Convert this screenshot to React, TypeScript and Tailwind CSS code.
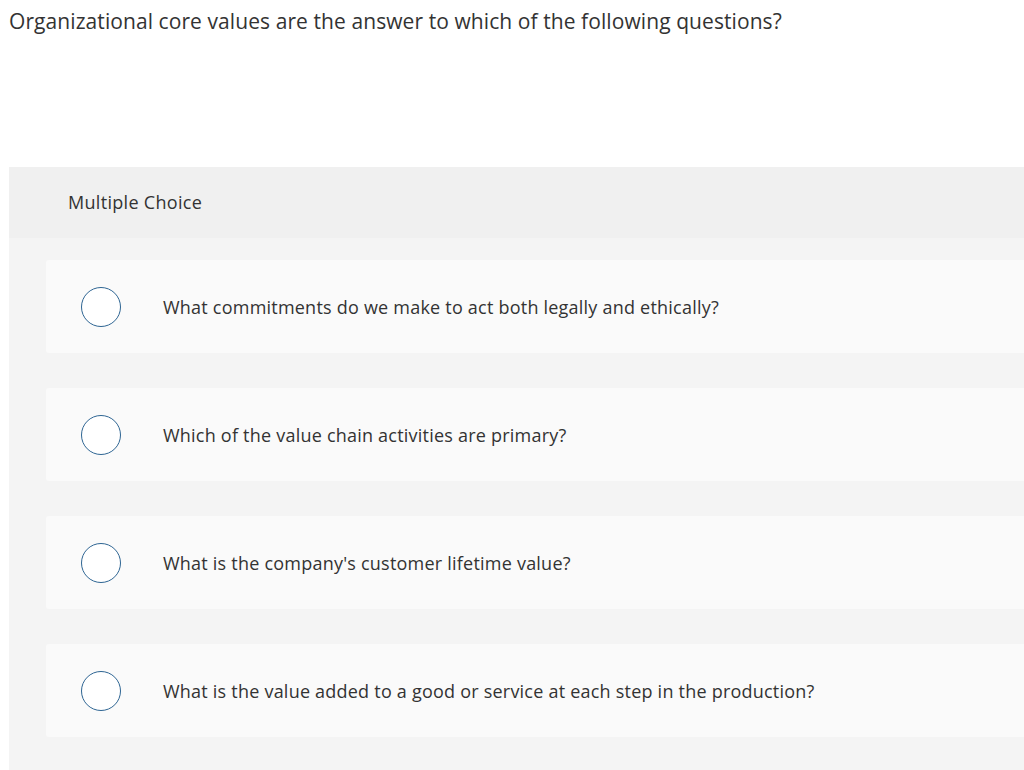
import React from 'react';

const options = [
  'What commitments do we make to act both legally and ethically?',
  'Which of the value chain activities are primary?',
  "What is the company's customer lifetime value?",
  'What is the value added to a good or service at each step in the production?',
];

const App: React.FC = () => {
  return (
    <div className="min-h-screen bg-white overflow-hidden font-['Open_Sans',sans-serif] text-[#333]">
      {/* Question */}
      <p className="pl-[9px] pt-[7px] text-[21px] leading-[28px] tracking-[0.08px]">
        Organizational core values are the answer to which of the following questions?
      </p>

      {/* Answer panel */}
      <div className="mt-[132px] ml-[9px] mr-[-20px] rounded-tl-[3px] bg-[#f4f4f4] pb-[34px]">
        <div className="h-[71px] bg-[#f0f0f0] pl-[59px] pt-[24px] text-[18px] leading-[22px] tracking-[0.3px]">
          Multiple Choice
        </div>

        <div className="flex flex-col gap-[35px] pt-[22px] pl-[37px]">
          {options.map((opt) => (
            <div key={opt} className="flex h-[93px] items-center rounded-[3px] bg-[#fafafa]">
              <span className="ml-[35px] h-[40px] w-[40px] shrink-0 rounded-full border-[1.5px] border-[#2e6593] bg-white" />
              <span className="ml-[42px] text-[18px] leading-[22px] tracking-[0.22px]">{opt}</span>
            </div>
          ))}
        </div>
      </div>
    </div>
  );
};

export default App;
